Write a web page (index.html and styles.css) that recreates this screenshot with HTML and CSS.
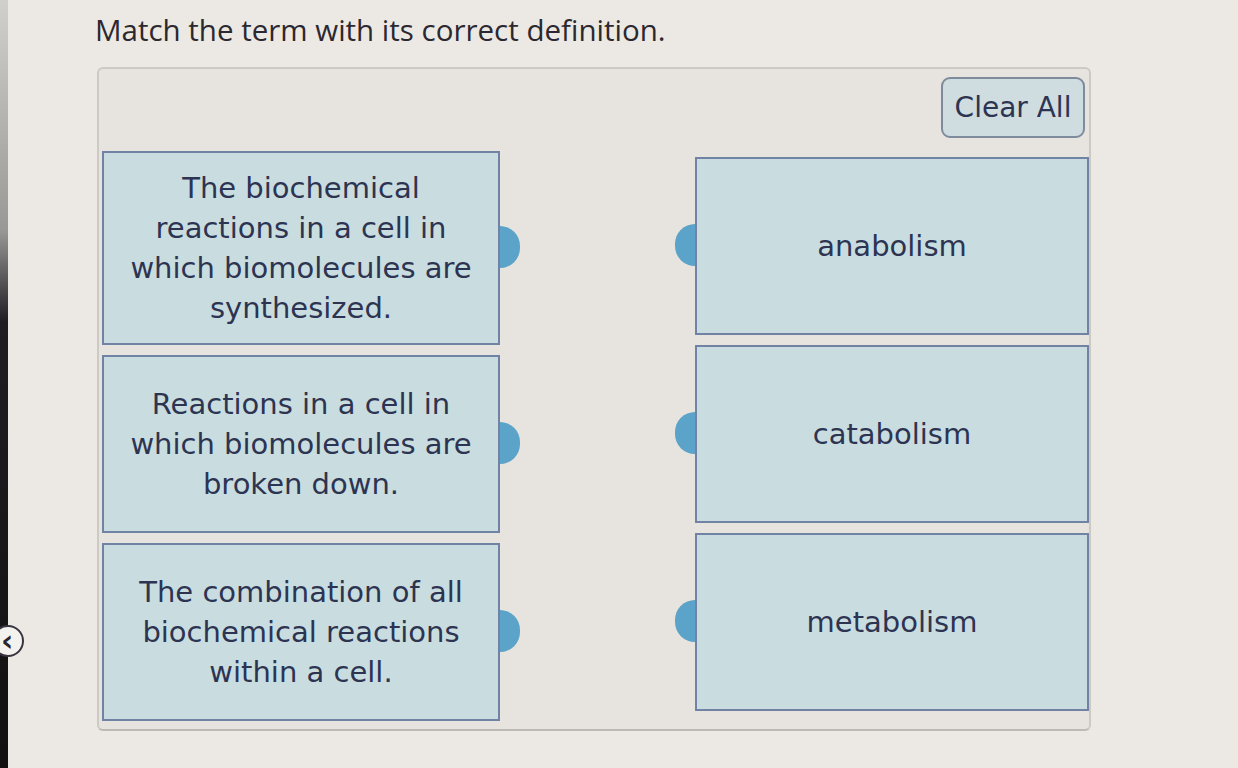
FILE: index.html
```html
<!DOCTYPE html>
<html lang="en">

<head>
    <meta charset="UTF-8">
    <meta name="viewport" content="width=device-width, initial-scale=1.0">
    <title>Match the term</title>
    <link rel="stylesheet" href="styles.css">
</head>

<body>
    <div class="side-bar"></div>
    <button class="side-back">&lsaquo;</button>

    <h1 class="prompt">Match the term with its correct definition.</h1>

    <div class="match-box">
        <div class="match-header">
            <button class="clear-all">Clear All</button>
        </div>
        <div class="match-columns">
            <div class="column column-left">
                <div class="card definition tall">The biochemical reactions in a cell in which biomolecules are synthesized.</div>
                <div class="card definition">Reactions in a cell in which biomolecules are broken down.</div>
                <div class="card definition">The combination of all biochemical reactions within a cell.</div>
            </div>
            <div class="column column-right">
                <div class="card term">anabolism</div>
                <div class="card term">catabolism</div>
                <div class="card term">metabolism</div>
            </div>
        </div>
    </div>
</body>

</html>
```

FILE: styles.css
```css
body {
    margin: 0;
    padding: 10px 0 0 95px;
    background-color: #ece9e4;
    font-family: "DejaVu Sans", Verdana, sans-serif;
    color: #2d3452;
    min-height: 768px;
    box-sizing: border-box;
    position: relative;
}

/* dark strip along the left edge */
.side-bar {
    position: absolute;
    left: 0;
    top: 0;
    width: 8px;
    height: 768px;
    background: linear-gradient(to bottom, #d2d0cc 0%, #9a9896 30%, #1e1d22 42%, #111 100%);
}

.side-back {
    position: absolute;
    left: -8px;
    top: 625px;
    width: 32px;
    height: 32px;
    border-radius: 50%;
    border: 2px solid #3a3340;
    background-color: #f4f2ef;
    color: #2a2530;
    font-family: "DejaVu Sans", sans-serif;
    font-size: 30px;
    font-weight: bold;
    line-height: 24px;
    padding: 0 0 0 7px;
    text-align: left;
}

.prompt {
    margin: 0 0 17px 0;
    font-family: "Open Sans", sans-serif;
    font-weight: normal;
    font-size: 29.5px;
    line-height: 40px;
    color: #2b2830;
}

.match-box {
    width: 994px;
    margin-left: 2px;
    box-sizing: border-box;
    background-color: #e7e4df;
    border: 2px solid #cdcac5;
    border-bottom-color: #bdbab5;
    border-radius: 6px;
    padding: 0 0 8px 3px;
}

.match-header {
    display: flex;
    justify-content: flex-end;
    padding: 8px 4px 0 0;
    height: 74px;
}

.clear-all {
    width: 144px;
    height: 61px;
    background-color: #cfdde0;
    border: 2px solid #7d8b9c;
    border-radius: 9px;
    font-family: "DejaVu Sans", Verdana, sans-serif;
    font-size: 28px;
    color: #2d3452;
    padding: 0;
}

.match-columns {
    display: flex;
    justify-content: space-between;
}

.column {
    display: flex;
    flex-direction: column;
    gap: 10px;
}

.column-left {
    width: 398px;
}

.column-right {
    width: 394px;
    padding-top: 6px;
}

.card {
    position: relative;
    box-sizing: border-box;
    min-height: 178px;
    display: flex;
    align-items: center;
    justify-content: center;
    text-align: center;
    background-color: #c9dde0;
    border: 2px solid #7083a5;
    font-size: 29px;
    line-height: 40px;
    padding: 15px 16px;
}

.card.tall {
    min-height: 194px;
}

/* half-round drop handles */
.definition::after,
.term::before {
    content: "";
    position: absolute;
    top: 50%;
    width: 20px;
    height: 42px;
    margin-top: -22px;
    background-color: #5ba3c8;
}

.definition::after {
    right: -22px;
    border-radius: 0 21px 21px 0;
}

.term::before {
    left: -22px;
    border-radius: 21px 0 0 21px;
}
```
